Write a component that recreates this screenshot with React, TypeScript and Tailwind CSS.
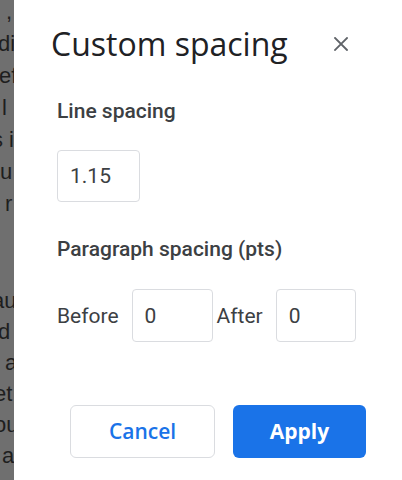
import React from "react";

const topLines: [string, string][] = [
  [",", "ml-[6px]"],
  ["di", "ml-[-2px]"],
  ["ef", "ml-[-1px]"],
  ["l", "ml-[2px]"],
  ["s i", "ml-[-8px]"],
  ["u", "ml-0"],
  ["r", "ml-[5px]"],
];
const bottomLines: [string, string][] = [
  ["au", "ml-[-8px]"],
  ["d", "ml-[-2px]"],
  ["a", "ml-[5px]"],
  ["et", "ml-[-6px]"],
  ["ou", "ml-[-6px]"],
  ["a", "ml-[2px]"],
];

export default function App() {
  return (
    <div className="flex w-[402px] h-[480px] overflow-hidden bg-white">
      <div
        className="w-[14px] shrink-0 bg-[#6f6f6f] overflow-hidden text-[#1e1e1e] text-[22px]"
        style={{ fontFamily: '"Liberation Sans", Arial, sans-serif' }}
      >
        <div className="-mt-[4px] leading-[32px]">
          {topLines.map(([t, c], i) => (
            <div key={i} className={`whitespace-pre ${c}`}>
              {t}
            </div>
          ))}
        </div>
        <div className="mt-[65px] leading-[31px]">
          {bottomLines.map(([t, c], i) => (
            <div key={i} className={`whitespace-pre ${c}`}>
              {t}
            </div>
          ))}
        </div>
      </div>
      <div
        className="flex-1 bg-white pl-[43px] pt-[24px] flex flex-col"
        style={{ fontFamily: 'Roboto, "Noto Sans", sans-serif' }}
      >
        <div className="flex items-center">
          <h1
            className="ml-[-6px] text-[32px] leading-[40px] text-[#202124] font-normal"
            style={{ fontFamily: '"Open Sans", Roboto, sans-serif' }}
          >
            Custom spacing
          </h1>
          <button className="ml-auto mr-[54px] w-[14px] h-[14px] flex items-center justify-center">
            <svg width="14" height="14" viewBox="0 0 14 14">
              <path
                d="M1 1L13 13M13 1L1 13"
                stroke="#5f6368"
                strokeWidth="1.8"
                strokeLinecap="square"
              />
            </svg>
          </button>
        </div>

        <div className="mt-[35px] text-[21px] leading-[24px] font-medium text-[#3c4043]">
          Line spacing
        </div>

        <div className="mt-[27px] w-[83px] h-[52px] border border-[#dadce0] rounded-[4px] flex items-center pl-[12px] text-[21px] leading-[24px] text-[#3c4043]">
          1.15
        </div>

        <div className="mt-[35px] text-[21px] leading-[24px] font-medium text-[#3c4043]">
          Paragraph spacing (pts)
        </div>

        <div className="mt-[28px] flex items-center text-[21px] leading-[24px] text-[#3c4043]">
          <span className="mr-[13px]">Before</span>
          <div className="w-[81px] h-[53px] border border-[#dadce0] rounded-[4px] flex items-center pl-[12px]">
            0
          </div>
          <span className="ml-[4px] mr-[13px]">After</span>
          <div className="w-[80px] h-[53px] border border-[#dadce0] rounded-[4px] flex items-center pl-[12px]">
            0
          </div>
        </div>

        <div
          className="mt-[63px] flex items-center ml-[13px] gap-[18px] text-[21px]"
          style={{ fontFamily: '"Open Sans", Roboto, sans-serif' }}
        >
          <button className="w-[145px] h-[53px] border border-[#dadce0] rounded-[6px] text-[#1a73e8] font-semibold bg-white">
            Cancel
          </button>
          <button className="w-[133px] h-[53px] rounded-[6px] bg-[#1a73e8] text-white font-bold">
            Apply
          </button>
        </div>
      </div>
    </div>
  );
}
